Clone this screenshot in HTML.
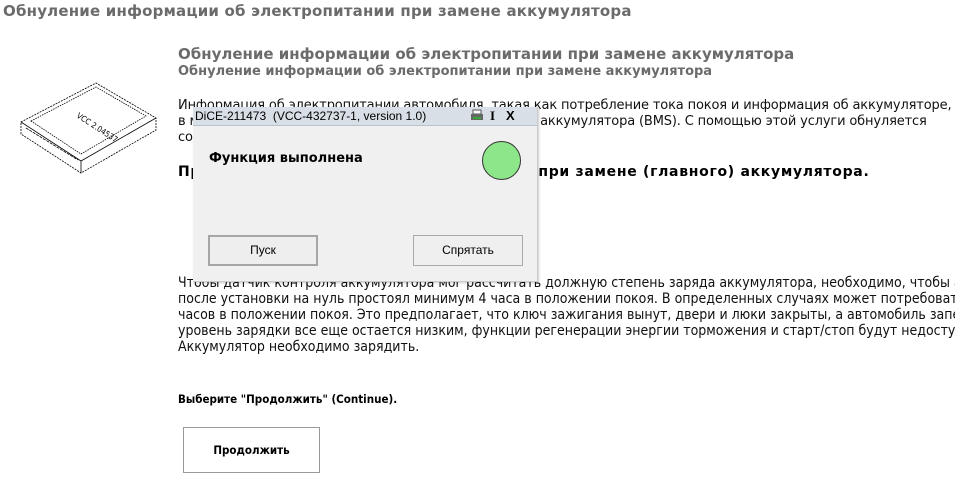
<!DOCTYPE html><html><head><meta charset="utf-8"><style>
html,body{margin:0;width:955px;height:488px;overflow:hidden;}
body{background:#fff;position:relative;font-family:"DejaVu Sans Condensed","Liberation Sans",sans-serif;}
.a{position:absolute;white-space:nowrap;}
.h{color:#6b6b6b;font-weight:bold;font-family:"DejaVu Sans","Liberation Sans",sans-serif;}
.p{font-size:13px;color:#111;line-height:16px;}
.clip{position:absolute;overflow:hidden;}
</style></head><body>
<div class="a h" style="left:3px;top:2px;font-size:15px;letter-spacing:0.2px">Обнуление информации об электропитании при замене аккумулятора</div>
<div class="a h" style="left:178px;top:45px;font-size:15px;letter-spacing:0px">Обнуление информации об электропитании при замене аккумулятора</div>
<div class="a h" style="left:178px;top:64px;font-size:13px;letter-spacing:0px">Обнуление информации об электропитании при замене аккумулятора</div>
<div class="clip" style="left:178px;top:98px;width:777px;height:50px"><div class="a p" style="left:0;top:0;font-family:'DejaVu Sans',sans-serif;font-size:13px;letter-spacing:-0.15px">Информация об электропитании автомобиля, такая как потребление тока покоя и информация об аккумуляторе, сохраняется<br>в модуле управления при помощи датчика контроля аккумулятора (BMS). С помощью этой услуги обнуляется<br>сохраненная информация.</div></div>
<div class="a" style="left:178px;top:164px;font-size:14px;font-weight:bold;font-family:'DejaVu Sans',sans-serif;letter-spacing:0.7px">Производится установка на нуль только при замене (главного) аккумулятора.</div>
<div class="clip" style="left:178px;top:275px;width:777px;height:82px"><div class="a p" style="left:0;top:0;font-size:14px;letter-spacing:0px">Чтобы датчик контроля аккумулятора мог рассчитать должную степень заряда аккумулятора, необходимо, чтобы автомобиль<br>после установки на нуль простоял минимум 4 часа в положении покоя. В определенных случаях может потребоваться больше<br>часов в положении покоя. Это предполагает, что ключ зажигания вынут, двери и люки закрыты, а автомобиль заперт. Если<br>уровень зарядки все еще остается низким, функции регенерации энергии торможения и старт/стоп будут недоступны.<br>Аккумулятор необходимо зарядить.</div></div>
<div class="a" style="left:178px;top:392px;font-size:11.5px;font-weight:bold">Выберите "Продолжить" (Continue).</div>
<div class="a" style="left:183px;top:427px;width:135px;height:44px;border:1px solid #999;font-size:11.5px;font-weight:bold;text-align:center;line-height:44px">Продолжить</div>
<svg class="a" style="left:18px;top:70px" width="140" height="105" viewBox="0 0 140 105" fill="none" stroke="#000" stroke-width="0.8">
<path d="M3 52 L78 13 L138 48 L138 60 L63 103 L3 64 Z" stroke-dasharray="2 1"/>
<path d="M3 52 L63 91 L138 48 M63 91 L63 103"/>
<path d="M13 51 L78 17 L128 46 L63 84 Z" stroke-dasharray="1.5 1"/>
<path d="M8 58 L60 90" stroke-dasharray="3 1"/>
<text x="58" y="47" font-size="8" fill="#000" stroke="none" transform="rotate(33 58 47)">VCC 2.04537</text>
</svg>
<div class="a" style="left:193px;top:107px;width:344px;height:174px;background:#f0f0f0;border-right:1px solid #ccc;border-bottom:1px solid #ccc;box-shadow:1px 1px 2px rgba(0,0,0,.2)">
<div style="height:18px;background:#d8dfe7;border-bottom:1px solid #b8c2cc;font-family:'Liberation Sans Narrow','Liberation Sans',sans-serif;font-size:12px;line-height:18px;padding-left:2px">DiCE-211473&nbsp;&nbsp;(VCC-432737-1, version 1.0)</div>
<svg style="position:absolute;left:277px;top:2px" width="14" height="13"><rect x="3" y="1" width="8" height="4" fill="#fff" stroke="#555"/><rect x="1" y="5" width="12" height="6" fill="#666"/><rect x="3" y="8" width="8" height="2" fill="#3a3"/></svg>
<div style="position:absolute;left:297px;top:1px;font:bold 13px 'Liberation Serif',serif">I</div>
<div style="position:absolute;left:313px;top:1px;font:bold 13px 'Liberation Sans',sans-serif">X</div>
<div style="position:absolute;left:16px;top:44px;font:bold 13px 'DejaVu Sans',sans-serif">Функция выполнена</div>
<div style="position:absolute;left:289px;top:34px;width:37px;height:37px;border-radius:50%;background:#8ee68a;border:1px solid #333"></div>
<div style="position:absolute;left:15px;top:128px;width:106px;height:27px;border:2px solid #a6a6a6;background:#eee;font:12px 'Liberation Sans',sans-serif;text-align:center;line-height:27px">Пуск</div>
<div style="position:absolute;left:220px;top:128px;width:108px;height:29px;border:1px solid #aaa;background:#efefef;font:12px 'Liberation Sans',sans-serif;text-align:center;line-height:29px">Спрятать</div>
</div>
</body></html>
